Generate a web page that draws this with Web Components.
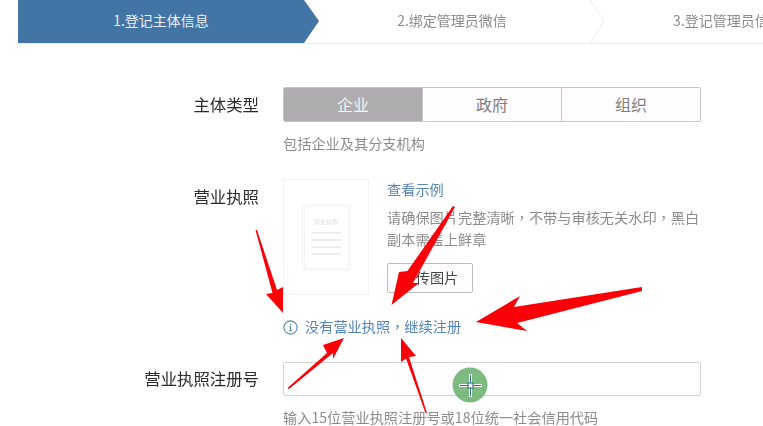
<!DOCTYPE html>
<html lang="zh-CN">
<head>
<meta charset="UTF-8">
<title>登记主体信息</title>
<style>
  html, body { margin: 0; height: 100%; overflow: hidden; background: #fff; }
  body { font: 14px "Noto Sans CJK SC", "Liberation Sans", sans-serif; color: #8c8c8c; }
  .page { position: relative; width: 763px; height: 426px; overflow: hidden; }
  /* the reference is a slightly soft, upscaled capture */
  reg-steps, reg-form { filter: blur(0.3px); }
</style>
</head>
<body>
<div class="page">
  <reg-steps>
    <reg-step active width="286" pad="0">1.登记主体信息</reg-step>
    <reg-step width="286" pad="10">2.绑定管理员微信</reg-step>
    <reg-step width="173" pad="83" plain>3.登记管理员信息</reg-step>
  </reg-steps>

  <reg-form>
    <form-row label="主体类型" top="43" pad="5" hint="包括企业及其分支机构">
      <seg-group>
        <seg-item active>企业</seg-item>
        <seg-item>政府</seg-item>
        <seg-item>组织</seg-item>
      </seg-group>
    </form-row>

    <form-row label="营业执照" top="28" pad="5">
      <license-upload></license-upload>
    </form-row>

    <form-row label="营业执照注册号" top="25" pad="4" hint="输入15位营业执照注册号或18位统一社会信用代码">
      <text-box></text-box>
    </form-row>
  </reg-form>

  <mark-layer></mark-layer>
</div>

<template id="steps-tpl">
  <style>
    :host { display: flex; height: 43px; margin-left: 18px; border-bottom: 1px solid #e8eaf1; overflow: hidden; }
  </style>
  <slot></slot>
</template>

<template id="step-tpl">
  <style>
    :host { display: block; position: relative; flex: none; height: 43px; line-height: 40px; font-size: 14px; color: #8c8c8c; text-align: center; box-sizing: border-box; }
    :host([active]) { background: #4374a6; color: #e9eff6; }
    :host([plain]) { text-align: left; white-space: nowrap; }
    svg { position: absolute; top: 0; left: 100%; width: 16px; height: 43px; z-index: 1; }
    :host([plain]) svg { display: none; }
  </style>
  <slot></slot>
  <svg viewBox="0 0 16 43"></svg>
</template>

<template id="row-tpl">
  <style>
    :host { display: grid; grid-template-columns: 259px 418px; column-gap: 24px; color: #8c8c8c; font-size: 14.2px; }
    .label { font-size: 16.4px; color: #2b2b2b; text-align: right; line-height: 24px; white-space: nowrap; }
    .hint { margin-top: 13px; line-height: 16px; white-space: nowrap; }
    .hint:empty { display: none; }
  </style>
  <div class="label"></div>
  <div>
    <slot></slot>
    <div class="hint"></div>
  </div>
</template>

<template id="seg-group-tpl">
  <style>
    :host { display: flex; height: 35px; box-sizing: border-box; border: 1px solid #c6c6c6; border-radius: 2px; overflow: hidden; }
  </style>
  <slot></slot>
</template>

<template id="seg-item-tpl">
  <style>
    :host { display: block; flex: 1; text-align: center; font-size: 16px; line-height: 33px; color: #7e7e7e; border-left: 1px solid #c6c6c6; background: #fffdff; }
    :host(:first-child) { border-left: 0; }
    :host([active]) { background: #aeacaf; color: #f4f4f4; }
  </style>
  <slot></slot>
</template>

<template id="upload-tpl">
  <style>
    :host { display: block; }
    .top { display: flex; gap: 18px; }
    .thumb { flex: none; width: 86px; height: 116px; box-sizing: border-box; border: 1px solid #f4f3f4; display: flex; align-items: center; justify-content: center; }
    .sheet { width: 49px; height: 67px; box-sizing: border-box; border: 1px solid #f4f3f4; padding: 1px; }
    .inner { height: 100%; box-sizing: border-box; border: 1px solid #f4f3f4; padding: 11px 6px 0; display: flex; flex-direction: column; align-items: center; }
    .cap { font-size: 6px; line-height: 8px; color: #e6dfdf; white-space: nowrap; margin-bottom: 6px; }
    .ln { width: 30px; height: 2px; background: #eeeeee; margin-bottom: 5px; flex: none; }
    .side { flex: 1; min-width: 0; }
    a { display: block; margin-top: -1px; color: #5485b6; line-height: 22px; text-decoration: none; }
    /* TC face with a zh-Hant lang: its comma sits mid-cell, as in the reference */
    p { margin: 6px 0 0; line-height: 22px; color: #8c8c8c; width: 316px; font-family: "Noto Sans CJK TC", sans-serif; }
    button { display: block; margin-top: 13px; width: 86px; height: 30px; padding: 0 0 2px; background: #fffdff; border: 1px solid #bdbdbd; border-radius: 2px; font: inherit; color: #454545; }
    .tip { display: flex; align-items: center; gap: 7px; margin-top: 20px; line-height: 22px; color: #5485b6; white-space: nowrap; font-family: "Noto Sans CJK TC", sans-serif; }
    .tip svg { flex: none; width: 15px; height: 15px; margin-top: 2px; }
  </style>
  <div class="top">
    <div class="thumb">
      <div class="sheet"><div class="inner">
        <div class="cap">营业执照</div>
        <div class="ln"></div><div class="ln"></div><div class="ln"></div><div class="ln"></div>
      </div></div>
    </div>
    <div class="side">
      <a>查看示例</a>
      <p lang="zh-Hant">请确保图片完整清晰，不带与审核无关水印，黑白副本需盖上鲜章</p>
      <button type="button">上传图片</button>
    </div>
  </div>
  <div class="tip" lang="zh-Hant">
    <svg viewBox="0 0 15 15" fill="none" stroke="#5b87b4">
      <circle cx="7.5" cy="7.5" r="6.6" stroke-width="1.1"/>
      <path d="M7.5 6.6v4M6.3 6.7h1.2M6.2 10.6h2.6" stroke-width="1.1"/>
      <path d="M7.5 3.9v1.2" stroke-width="1.3"/>
    </svg>
    <span>没有营业执照，继续注册</span>
  </div>
</template>

<template id="text-box-tpl">
  <style>
    :host { display: block; height: 34px; box-sizing: border-box; border: 1px solid #d2d2d2; border-radius: 2px; background: #fff; }
  </style>
</template>

<template id="marks-tpl">
  <style>
    :host { display: block; position: absolute; left: 0; top: 0; width: 763px; height: 426px; pointer-events: none; }
    svg { display: block; }
  </style>
  <svg width="763" height="426" viewBox="0 0 763 426">
    <g fill="#fb0007">
      <polygon points="255.5,230 257,230 277,290 283,287 283,313 266,294 272.5,293"/>
      <polygon points="453,206 455,207 413,283 419,283 391.5,305 399,272 407.500,271"/>
      <polygon points="642,287 642,291 517,323 527,331 476,322 520,296 514,307"/>
      <polygon points="344,338 333,359 333,353 289,389 287.500,388 327,353 323,345"/>
      <polygon points="401,338 416,356 409,357 427,413 425.500,413 406,358.500 401,362"/>
    </g>
    <circle cx="470" cy="385" r="17.500" fill="rgba(108,178,110,.88)"/>
    <path d="M470.500 374v23M459 385.500h23" stroke="#fff" stroke-width="3"/>
    <path d="M470.500 375v21M460 385.500h21" stroke="#2c6a84" stroke-width="1"/>
    <rect x="468" y="383" width="5" height="5" fill="#fff" stroke="#1e5f86" stroke-width="1"/>
  </svg>
</template>

<script>
  function mount(el, id) {
    el.attachShadow({ mode: 'open' });
    el.shadowRoot.append(document.getElementById(id).content.cloneNode(true));
  }

  class RegSteps extends HTMLElement {
    connectedCallback() { mount(this, 'steps-tpl'); }
  }

  class RegStep extends HTMLElement {
    connectedCallback() {
      mount(this, 'step-tpl');
      this.style.width = this.getAttribute('width') + 'px';
      this.style.paddingLeft = this.getAttribute('pad') + 'px';
      // filled arrow for the active step, thin chevron for the others
      const svg = this.shadowRoot.querySelector('svg');
      svg.innerHTML = this.hasAttribute('active')
        ? '<path d="M0 0L15 21L0 43Z" fill="#4374a6"/>'
        : '<path d="M0 0L14.500 21L0.500 43" fill="none" stroke="#eceef3"/>';
    }
  }

  class RegForm extends HTMLElement {
    connectedCallback() { this.style.display = 'block'; }
  }

  class FormRow extends HTMLElement {
    connectedCallback() {
      mount(this, 'row-tpl');
      const label = this.shadowRoot.querySelector('.label');
      label.textContent = this.getAttribute('label');
      label.style.paddingTop = this.getAttribute('pad') + 'px';
      this.shadowRoot.querySelector('.hint').textContent = this.getAttribute('hint') || '';
      this.style.marginTop = this.getAttribute('top') + 'px';
    }
  }

  class SegGroup extends HTMLElement {
    connectedCallback() { mount(this, 'seg-group-tpl'); }
  }
  class SegItem extends HTMLElement {
    connectedCallback() { mount(this, 'seg-item-tpl'); }
  }
  class LicenseUpload extends HTMLElement {
    connectedCallback() { mount(this, 'upload-tpl'); }
  }
  class TextBox extends HTMLElement {
    connectedCallback() { mount(this, 'text-box-tpl'); }
  }
  class MarkLayer extends HTMLElement {
    connectedCallback() { mount(this, 'marks-tpl'); }
  }

  customElements.define('reg-steps', RegSteps);
  customElements.define('reg-step', RegStep);
  customElements.define('reg-form', RegForm);
  customElements.define('form-row', FormRow);
  customElements.define('seg-group', SegGroup);
  customElements.define('seg-item', SegItem);
  customElements.define('license-upload', LicenseUpload);
  customElements.define('text-box', TextBox);
  customElements.define('mark-layer', MarkLayer);
</script>
</body>
</html>
